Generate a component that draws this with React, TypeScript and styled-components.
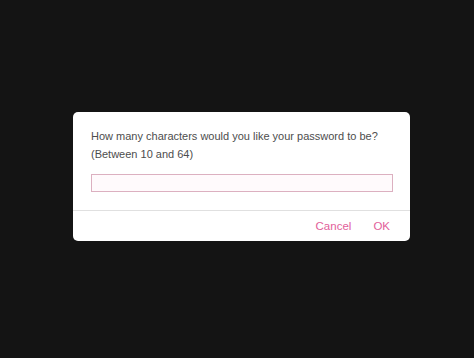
import React from 'react';
import styled, { createGlobalStyle } from 'styled-components';

const GlobalStyle = createGlobalStyle`
  html, body {
    margin: 0;
    padding: 0;
    background: #141414;
  }
`;

const Screen = styled.div`
  width: 474px;
  height: 358px;
  background: #141414;
  display: flex;
  align-items: flex-start;
  justify-content: center;
  padding-top: 112px;
  box-sizing: border-box;
  font-family: 'Liberation Sans', Arial, sans-serif;
`;

const Dialog = styled.div`
  width: 337px;
  margin-left: 9px;
  background: #ffffff;
  border-radius: 5px;
  overflow: hidden;
  display: flex;
  flex-direction: column;
`;

const Body = styled.div`
  padding: 15px 18px 18px 18px;
`;

const Message = styled.p`
  margin: 0;
  font-size: 11px;
  line-height: 18px;
  color: #4d4d4d;
  white-space: nowrap;
`;

const Field = styled.input`
  display: block;
  box-sizing: border-box;
  width: 302px;
  height: 18px;
  margin-top: 11px;
  border: 1px solid #dcb0c0;
  background: #fffafc;
  outline: none;
  padding: 0 2px;
  font-size: 11px;
  caret-color: #333;
`;

const Footer = styled.div`
  border-top: 1px solid #e0e0e0;
  height: 30px;
  display: flex;
  align-items: center;
  justify-content: flex-end;
  gap: 22px;
  padding: 0 20px 0 0;
`;

const TextButton = styled.button`
  background: none;
  border: none;
  padding: 0;
  font-family: 'Liberation Sans', Arial, sans-serif;
  font-size: 11.5px;
  color: #e2609a;
  cursor: pointer;
`;

export default function App() {
  return (
    <>
      <GlobalStyle />
      <Screen>
        <Dialog>
          <Body>
            <Message>
              How many characters would you like your password to be?
              <br />
              (Between 10 and 64)
            </Message>
            <Field autoFocus />
          </Body>
          <Footer>
            <TextButton>Cancel</TextButton>
            <TextButton>OK</TextButton>
          </Footer>
        </Dialog>
      </Screen>
    </>
  );
}
